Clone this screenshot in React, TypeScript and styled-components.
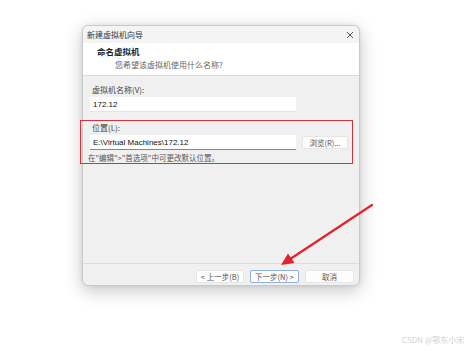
import styled, { createGlobalStyle } from "styled-components";

const GlobalStyle = createGlobalStyle`
  html, body { margin: 0; padding: 0; background: #fff; }
  body { font-family: "Noto Sans CJK SC", "Noto Sans", sans-serif; }
`;

const Page = styled.div`
  position: relative;
  width: 474px;
  height: 351px;
  box-sizing: border-box;
  padding: 25px 0 0 82px;
  overflow: hidden;
  background: #fff;
`;

const Dialog = styled.div`
  width: 278px;
  height: 261px;
  box-sizing: border-box;
  display: flex;
  flex-direction: column;
  border: 1px solid #c9c9c9;
  border-radius: 6px;
  background: #f0f0f0;
  box-shadow: 0 5px 18px rgba(0, 0, 0, 0.22), 0 0 4px rgba(0, 0, 0, 0.08);
`;

const TitleBar = styled.div`
  height: 17px;
  display: flex;
  align-items: center;
  justify-content: space-between;
  padding: 0 5px 0 4px;
  background: #f4f4f4;
  border-radius: 6px 6px 0 0;
  font-size: 8px;
  color: #333;
`;

const Header = styled.div`
  height: 33px;
  box-sizing: border-box;
  padding: 2px 0 0 14px;
  background: #fff;
  border-bottom: 1px solid #dadada;
`;

const HeaderTitle = styled.div`
  font-size: 8.5px;
  font-weight: 700;
  line-height: 13px;
  color: #222;
`;

const HeaderSub = styled.div`
  font-size: 8px;
  line-height: 13px;
  padding-left: 18px;
  color: #666;
`;

const Body = styled.div`
  flex: 1;
  padding: 8px 0 0 9px;
  display: flex;
  flex-direction: column;
`;

const Label = styled.div`
  font-size: 8px;
  line-height: 12px;
  color: #444;
`;

const Field = styled.div<{ $focused?: boolean }>`
  width: 206px;
  height: 15px;
  box-sizing: border-box;
  margin-left: -2px;
  padding-left: 3px;
  display: flex;
  align-items: center;
  background: #fff;
  border-bottom: ${(p) => (p.$focused ? "1.5px solid #5a8fc8" : "1px solid #e4e4e4")};
  font-family: "Liberation Sans", "Noto Sans", sans-serif;
  font-size: 8px;
  color: #111;
`;

const Group = styled.div`
  width: 273px;
  box-sizing: border-box;
  margin: 8px 0 0 -12px;
  padding: 1px 0 0 11px;
  border: 1.5px solid #d8303c;
`;

const Row = styled.div`
  display: flex;
  align-items: center;
  gap: 6px;
  margin-top: 1px;
`;

const Hint = styled.div`
  font-size: 7.5px;
  line-height: 11px;
  margin: 2px 0 0 -4px;
  color: #555;
`;

const Footer = styled.div`
  height: 22px;
  box-sizing: border-box;
  border-top: 1px solid #dcdcdc;
  display: flex;
  align-items: flex-end;
  justify-content: flex-end;
  gap: 6px;
  padding: 0 5px 2px 0;
`;

const Button = styled.div<{ $w: number; $primary?: boolean }>`
  width: ${(p) => p.$w}px;
  height: 13px;
  box-sizing: border-box;
  display: flex;
  align-items: center;
  justify-content: center;
  background: #fdfdfd;
  border: 1px solid ${(p) => (p.$primary ? "#8fb4dc" : "#e6e6e6")};
  border-radius: 2px;
  font-size: 7.5px;
  color: #555;
`;

const Watermark = styled.div`
  position: absolute;
  left: 402px;
  top: 334px;
  font-size: 8px;
  color: #d2d2d2;
`;

const Overlay = styled.svg`
  position: absolute;
  left: 0;
  top: 0;
  pointer-events: none;
`;

export default function App() {
  return (
    <>
      <GlobalStyle />
      <Page>
        <Dialog>
          <TitleBar>
            <span>新建虚拟机向导</span>
            <svg width="8" height="8" viewBox="0 0 8 8">
              <path d="M1 1 L7 7 M7 1 L1 7" stroke="#444" strokeWidth="0.9" />
            </svg>
          </TitleBar>
          <Header>
            <HeaderTitle>命名虚拟机</HeaderTitle>
            <HeaderSub>您希望该虚拟机使用什么名称?</HeaderSub>
          </Header>
          <Body>
            <Label>虚拟机名称(V):</Label>
            <Field style={{ marginTop: 1 }}>172.12</Field>
            <Group>
              <Label>位置(L):</Label>
              <Row>
                <Field $focused>E:\Virtual Machines\172.12</Field>
                <Button $w={46}>浏览(R)...</Button>
              </Row>
              <Hint>在"编辑"&gt;"首选项"中可更改默认位置。</Hint>
            </Group>
          </Body>
          <Footer>
            <Button $w={48}>&lt; 上一步(B)</Button>
            <Button $w={49} $primary>下一步(N) &gt;</Button>
            <Button $w={49}>取消</Button>
          </Footer>
        </Dialog>
        <Overlay width="474" height="351">
          <line x1="372" y1="205" x2="291" y2="258.5" stroke="#e2232b" strokeWidth="2.2" strokeLinecap="round" />
          <polygon points="281,265 294.5,263 288,253.5" fill="#e2232b" />
        </Overlay>
        <Watermark>CSDN @鄂东小宋</Watermark>
      </Page>
    </>
  );
}
